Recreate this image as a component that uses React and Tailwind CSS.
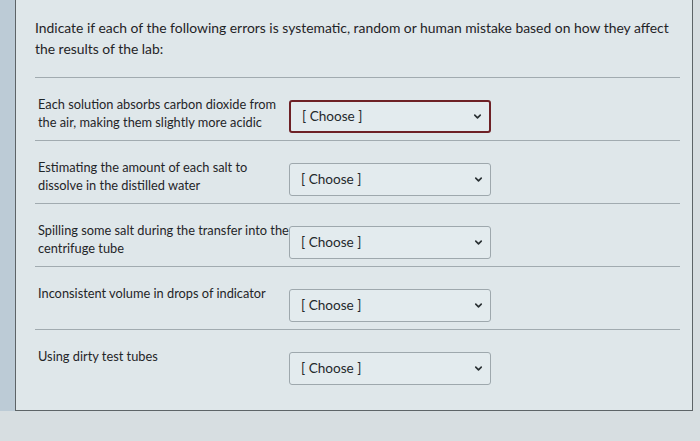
import { ChevronDown } from "lucide-react";

const rows = [
  { lines: ["Each solution absorbs carbon dioxide from", "the air, making them slightly more acidic"], focused: true },
  { lines: ["Estimating the amount of each salt to", "dissolve in the distilled water"] },
  { lines: ["Spilling some salt during the transfer into the", "centrifuge tube"] },
  { lines: ["Inconsistent volume in drops of indicator"] },
  { lines: ["Using dirty test tubes"] },
];

function ChooseSelect({ focused }) {
  return (
    <div
      className={
        "flex items-center justify-between w-[202px] h-[33px] rounded-[3px] bg-[#e3ebee] pl-[11px] pr-[6px] " +
        (focused ? "border-2 border-[#6e2126]" : "border border-[#9ea8ad]")
      }
    >
      <span className="text-[13.6px] text-[#23292c]">[ Choose ]</span>
      <ChevronDown size={11} strokeWidth={3.5} className="text-[#2a3033]" />
    </div>
  );
}

function MatchRow({ lines, focused, last }) {
  return (
    <div className={"flex items-start border-t border-[#a1abb0] " + (last ? "h-[79px]" : "h-[63px]")}>
      <div className="w-[254px] pl-[3px] pt-[17px] text-[12.8px] leading-[18px] text-[#1f2528]">
        {lines.map((l) => (
          <div key={l} className="whitespace-nowrap">{l}</div>
        ))}
      </div>
      <div className="mt-[22px]">
        <ChooseSelect focused={focused} />
      </div>
    </div>
  );
}

export default function App() {
  return (
    <div className="w-[700px] h-[441px] bg-[#d7dee1] overflow-hidden" style={{ fontFamily: "Lato, 'Open Sans', sans-serif" }}>
      <div className="flex h-[411px]">
        <div className="w-[15px] bg-[#bccbd6]" />
        <div className="w-[678px] bg-[#dfe7ea] border-l border-r border-b border-[#5d6467] pl-[19px] pr-[12px]">
          <div className="h-[77px] pt-[17px] text-[13.9px] leading-[21px] text-[#1f2427]">
            <div className="whitespace-nowrap">
              Indicate if each of the following errors is systematic, random or human mistake based on how they affect
            </div>
            <div>the results of the lab:</div>
          </div>
          {rows.map((r, i) => (
            <MatchRow key={i} {...r} last={i === rows.length - 1} />
          ))}
        </div>
      </div>
    </div>
  );
}
